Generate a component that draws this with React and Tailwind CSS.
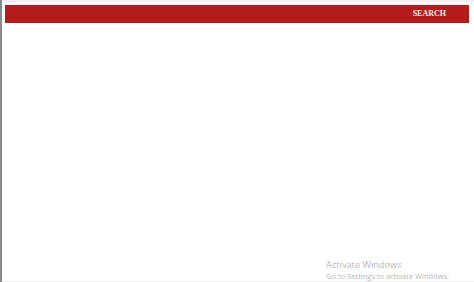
import React from 'react';

const App = () => (
  <div className="flex h-[282px] w-[474px] overflow-hidden bg-white">
    <div className="w-[2px] shrink-0 bg-[#8a8a8a]" />
    <div className="flex flex-1 flex-col">
      <div className="h-[2px] bg-[#f4f0f2]" />
      <div className="flex-1 pl-[3px] pr-[5px] pt-[3px]">
        <div className="flex h-[18px] items-center justify-end bg-[#b41c1c] pr-[23px]">
          <span
            className="text-[8px] font-bold uppercase leading-none text-[#f6eaea]"
            style={{ fontFamily: '"Liberation Serif", "DejaVu Serif", serif' }}
          >
            Search
          </span>
        </div>
      </div>
      <div className="flex justify-end pr-[25px]">
        <div
          className="flex flex-col text-[#b8b8b8]"
          style={{ fontFamily: '"Open Sans", "Noto Sans", sans-serif' }}
        >
          <span className="text-[9.2px] leading-[12px]">Activate Windows</span>
          <span className="text-[7.5px] leading-[10px]">Go to Settings to activate Windows.</span>
        </div>
      </div>
      <div className="h-[1px] bg-[#ececec]" />
    </div>
  </div>
);

export default App;
